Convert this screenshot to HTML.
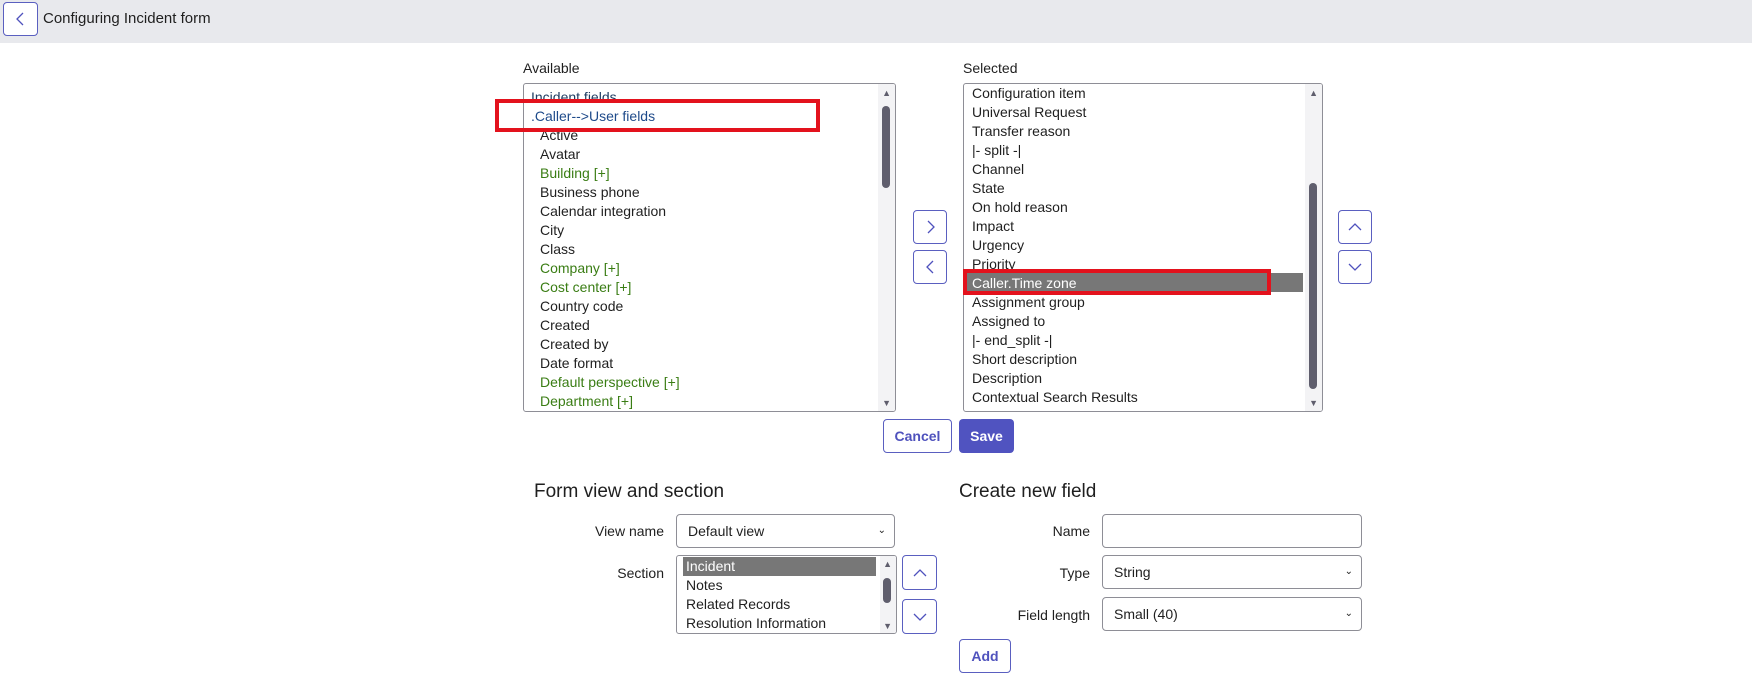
<!DOCTYPE html>
<html><head><style>
*{margin:0;padding:0;box-sizing:border-box}
body{width:1752px;height:665px;background:#fff;font-family:"Liberation Sans",sans-serif;color:#1f1f1f;position:relative;overflow:hidden;font-size:14px}
.a{position:absolute}
.hdr{left:0;top:0;width:1752px;height:43px;background:#e8e9ed}
.btn{border:1px solid #5a5fc0;border-radius:4px;background:#fff;color:#4f52bd}
.box{border:1px solid #8e8e96;border-radius:3px;background:#fff;overflow:hidden}
.it{position:absolute;height:19px;line-height:19px;white-space:nowrap;font-size:14px}
.g{color:#3a7d14}
.sb{background:#f3f3f5}
.thumb{background:#5f5e6d;border-radius:4px}
.tri{font-size:9px;color:#5f5e6d;position:absolute}
.red{border:4px solid #e3121d}
.sel{border:1px solid #8e8e96;border-radius:4px;background:#fff;height:34px;line-height:32px;padding-left:11px;font-size:14px}
.lbl{text-align:right;font-size:14px}
</style></head><body>
<div class="a hdr"></div>
<div class="a btn" style="left:3px;top:2px;width:35px;height:34px"><svg width="33" height="32"><path d="M19 10 L13 16 L19 22" stroke="#4f52bd" stroke-width="1.3" fill="none"/></svg></div>
<div class="a" style="left:43px;top:10px;font-size:15px">Configuring Incident form</div>

<div class="a" style="left:523px;top:60px;font-size:14px">Available</div>
<div class="a box" style="left:523px;top:83px;width:373px;height:329px">
 <div class="a sb" style="right:0;top:0;width:17px;height:100%"></div>
 <div class="a thumb" style="right:5px;top:22px;width:8px;height:82px"></div>
 <div class="tri" style="right:4px;top:4px">▲</div><div class="tri" style="right:4px;bottom:3px">▼</div>
 <div class="it" style="left:7px;top:4px;color:#1e3c62">Incident fields</div>
 <div class="it" style="left:7px;top:23px;color:#1e4a8a">.Caller-->User fields</div>
 <div class="it" style="left:16px;top:42px">Active</div>
 <div class="it" style="left:16px;top:61px">Avatar</div>
 <div class="it g" style="left:16px;top:80px">Building [+]</div>
 <div class="it" style="left:16px;top:99px">Business phone</div>
 <div class="it" style="left:16px;top:118px">Calendar integration</div>
 <div class="it" style="left:16px;top:137px">City</div>
 <div class="it" style="left:16px;top:156px">Class</div>
 <div class="it g" style="left:16px;top:175px">Company [+]</div>
 <div class="it g" style="left:16px;top:194px">Cost center [+]</div>
 <div class="it" style="left:16px;top:213px">Country code</div>
 <div class="it" style="left:16px;top:232px">Created</div>
 <div class="it" style="left:16px;top:251px">Created by</div>
 <div class="it" style="left:16px;top:270px">Date format</div>
 <div class="it g" style="left:16px;top:289px">Default perspective [+]</div>
 <div class="it g" style="left:16px;top:308px">Department [+]</div>
</div>
<div class="a red" style="left:495px;top:99px;width:325px;height:33px"></div>

<div class="a btn" style="left:913px;top:210px;width:34px;height:34px"><svg width="32" height="32"><path d="M14 10 L20 16 L14 22" stroke="#4f52bd" stroke-width="1.3" fill="none"/></svg></div>
<div class="a btn" style="left:913px;top:250px;width:34px;height:34px"><svg width="32" height="32"><path d="M19 10 L13 16 L19 22" stroke="#4f52bd" stroke-width="1.3" fill="none"/></svg></div>

<div class="a" style="left:963px;top:60px;font-size:14px">Selected</div>
<div class="a box" style="left:963px;top:83px;width:360px;height:329px">
 <div class="a sb" style="right:0;top:0;width:17px;height:100%"></div>
 <div class="a thumb" style="right:5px;top:99px;width:8px;height:206px"></div>
 <div class="tri" style="right:4px;top:4px">▲</div><div class="tri" style="right:4px;bottom:3px">▼</div>
 <div class="a" style="left:3px;top:189px;width:336px;height:19px;background:#777"></div>
 <div class="it" style="left:8px;top:0px">Configuration item</div>
 <div class="it" style="left:8px;top:19px">Universal Request</div>
 <div class="it" style="left:8px;top:38px">Transfer reason</div>
 <div class="it" style="left:8px;top:57px">|- split -|</div>
 <div class="it" style="left:8px;top:76px">Channel</div>
 <div class="it" style="left:8px;top:95px">State</div>
 <div class="it" style="left:8px;top:114px">On hold reason</div>
 <div class="it" style="left:8px;top:133px">Impact</div>
 <div class="it" style="left:8px;top:152px">Urgency</div>
 <div class="it" style="left:8px;top:171px">Priority</div>
 <div class="it" style="left:8px;top:190px;color:#fff">Caller.Time zone</div>
 <div class="it" style="left:8px;top:209px">Assignment group</div>
 <div class="it" style="left:8px;top:228px">Assigned to</div>
 <div class="it" style="left:8px;top:247px">|- end_split -|</div>
 <div class="it" style="left:8px;top:266px">Short description</div>
 <div class="it" style="left:8px;top:285px">Description</div>
 <div class="it" style="left:8px;top:304px">Contextual Search Results</div>
</div>
<div class="a red" style="left:963px;top:269px;width:308px;height:26px"></div>

<div class="a btn" style="left:1338px;top:210px;width:34px;height:34px"><svg width="32" height="32"><path d="M10 19 L16 13 L22 19" stroke="#4f52bd" stroke-width="1.3" fill="none"/></svg></div>
<div class="a btn" style="left:1338px;top:250px;width:34px;height:34px"><svg width="32" height="32"><path d="M10 13 L16 19 L22 13" stroke="#4f52bd" stroke-width="1.3" fill="none"/></svg></div>

<div class="a btn" style="left:883px;top:419px;width:69px;height:34px;line-height:32px;text-align:center;font-weight:bold;font-size:14px">Cancel</div>
<div class="a" style="left:959px;top:419px;width:55px;height:34px;line-height:34px;text-align:center;font-weight:bold;font-size:14px;background:#5053c0;color:#fff;border-radius:4px">Save</div>

<div class="a" style="left:534px;top:481px;font-size:19px">Form view and section</div>
<div class="a" style="left:959px;top:481px;font-size:19px">Create new field</div>

<div class="a lbl" style="left:560px;top:523px;width:104px">View name</div>
<div class="a sel" style="left:676px;top:514px;width:219px">Default view<span style="position:absolute;right:8px;font-size:10px">⌄</span></div>
<div class="a lbl" style="left:560px;top:565px;width:104px">Section</div>
<div class="a box" style="left:676px;top:555px;width:221px;height:79px">
 <div class="a sb" style="right:0;top:0;width:16px;height:100%"></div>
 <div class="a thumb" style="right:5px;top:22px;width:8px;height:25px"></div>
 <div class="tri" style="right:4px;top:3px">▲</div><div class="tri" style="right:4px;bottom:2px">▼</div>
 <div class="a" style="left:6px;top:1px;width:193px;height:19px;background:#777"></div>
 <div class="it" style="left:9px;top:1px;color:#fff">Incident</div>
 <div class="it" style="left:9px;top:20px">Notes</div>
 <div class="it" style="left:9px;top:39px">Related Records</div>
 <div class="it" style="left:9px;top:58px">Resolution Information</div>
</div>
<div class="a btn" style="left:902px;top:555px;width:35px;height:35px"><svg width="33" height="33"><path d="M11 20 L17 14 L23 20" stroke="#4f52bd" stroke-width="1.3" fill="none"/></svg></div>
<div class="a btn" style="left:902px;top:599px;width:35px;height:35px"><svg width="33" height="33"><path d="M11 14 L17 20 L23 14" stroke="#4f52bd" stroke-width="1.3" fill="none"/></svg></div>

<div class="a lbl" style="left:980px;top:523px;width:110px">Name</div>
<div class="a sel" style="left:1102px;top:514px;width:260px"></div>
<div class="a lbl" style="left:980px;top:565px;width:110px">Type</div>
<div class="a sel" style="left:1102px;top:555px;width:260px">String<span style="position:absolute;right:8px;font-size:10px">⌄</span></div>
<div class="a lbl" style="left:980px;top:607px;width:110px">Field length</div>
<div class="a sel" style="left:1102px;top:597px;width:260px">Small (40)<span style="position:absolute;right:8px;font-size:10px">⌄</span></div>
<div class="a btn" style="left:959px;top:639px;width:52px;height:34px;line-height:32px;text-align:center;font-weight:bold">Add</div>
</body></html>
